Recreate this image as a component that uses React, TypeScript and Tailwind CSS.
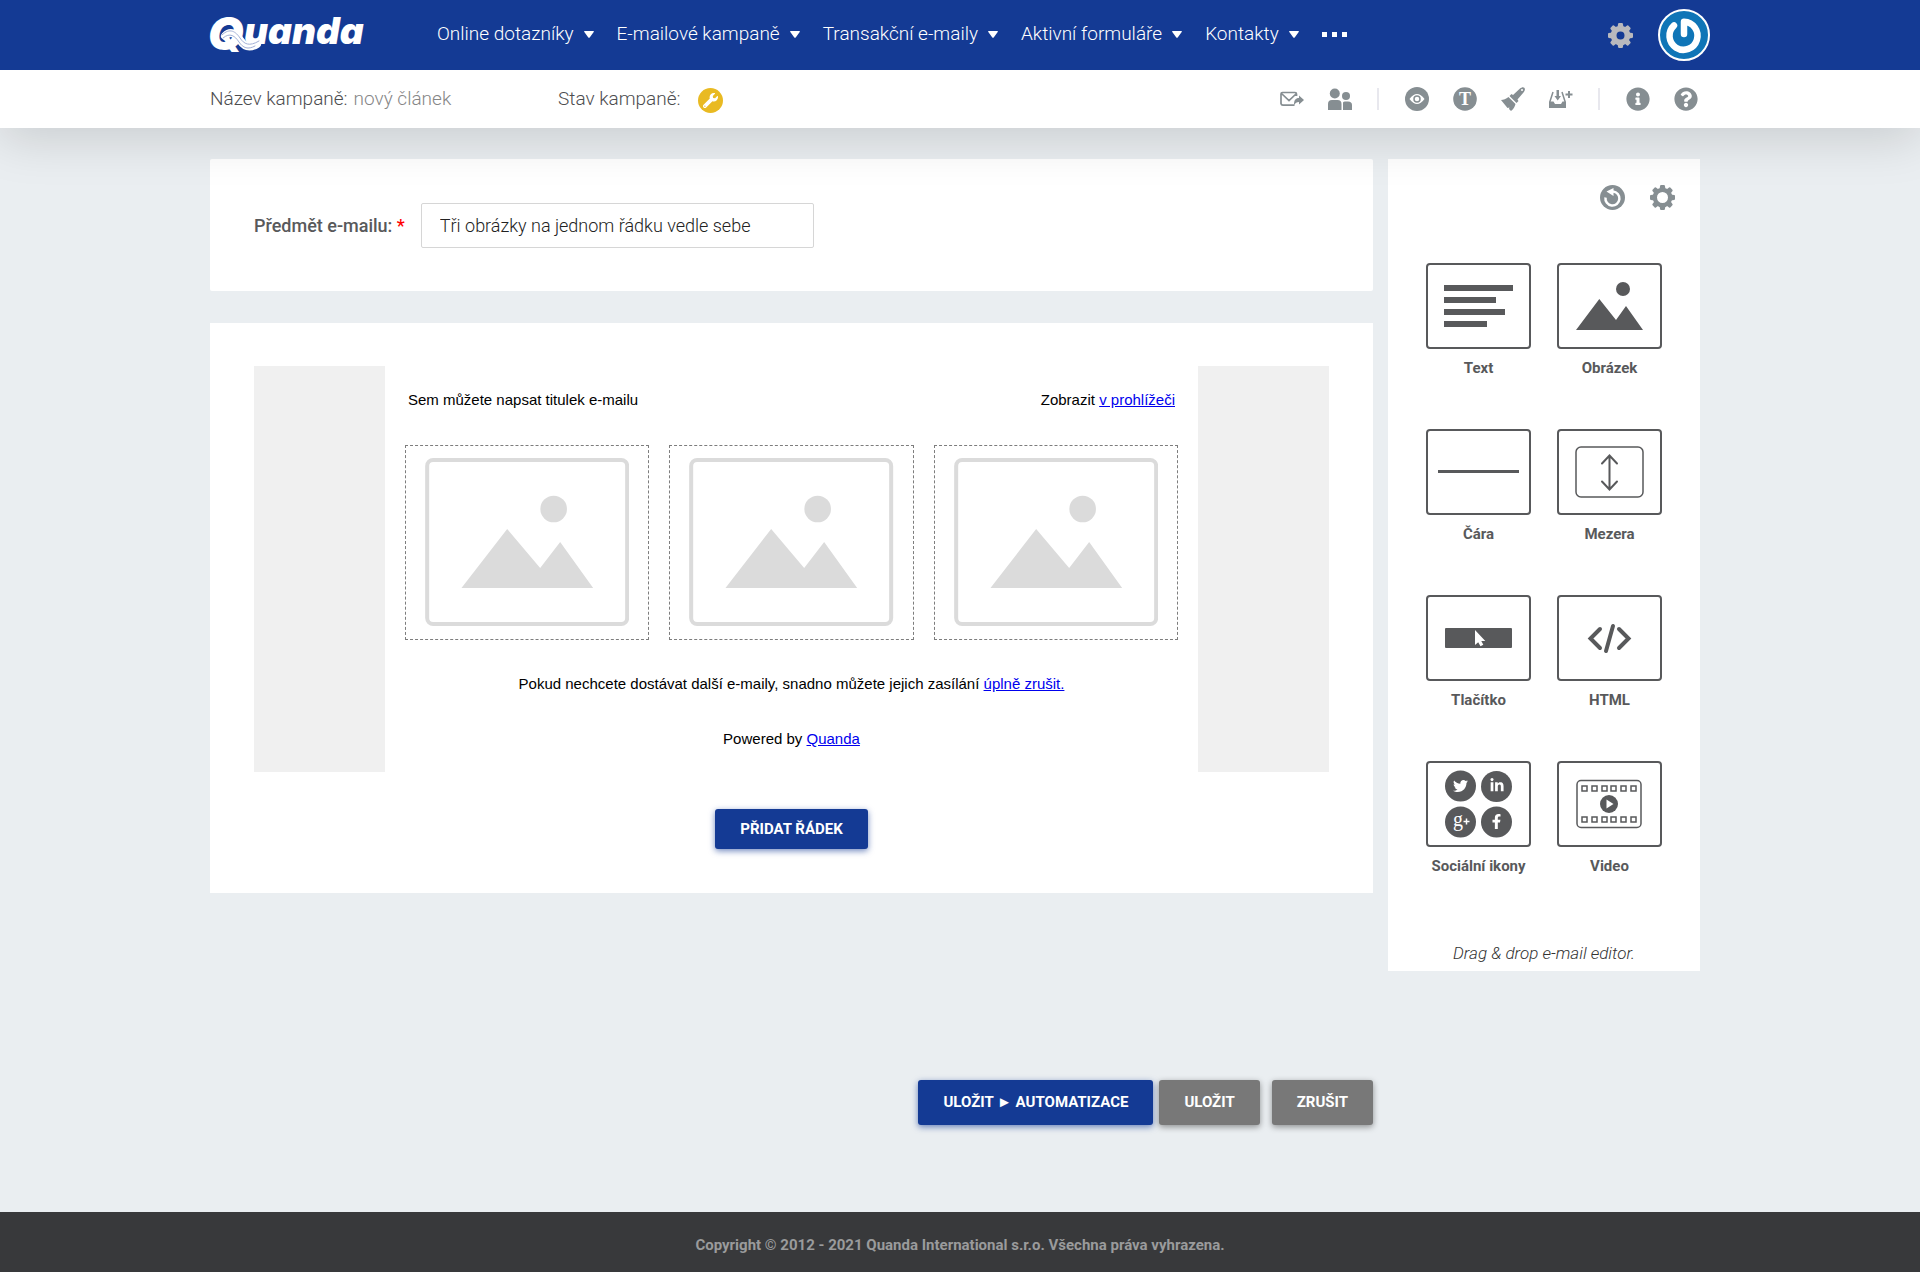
import React from "react";
import { FaTwitter, FaLinkedinIn, FaFacebookF, FaInfoCircle, FaQuestionCircle, FaWrench } from "react-icons/fa";

const menu = ["Online dotazníky", "E-mailové kampaně", "Transakční e-maily", "Aktivní formuláře", "Kontakty"];

function Gear({ className, hole = 4 }: { className?: string; hole?: number }) {
  return (
    <svg viewBox="0 0 25 25" className={className} fill="none" stroke="currentColor">
      <circle cx="12.5" cy="12.5" r={(9.8 + hole) / 2} strokeWidth={9.8 - hole} />
      {[0, 45, 90, 135, 180, 225, 270, 315].map((a) => (
        <path key={a} d="M9.5 4.500l.6-3.700q.2-.8.900-.8h3q.700 0 .9.800l.6 3.700z" fill="currentColor" stroke="none" transform={`rotate(${a} 12.5 12.5)`} />
      ))}
    </svg>
  );
}

function Logo() {
  return (
    <a href="#" className="w-[156px] shrink-0">
      <svg viewBox="0 0 156 46" className="w-[156px] h-[46px] font-['Inter',sans-serif] font-black italic overflow-visible" fill="white">
        <text x="-2" y="38" fontSize="46">Q</text>
        <text x="34" y="32" fontSize="37">uanda</text>
        <g fill="none" strokeLinecap="round">
          <path d="M15 24c6-6 11-2 15 4s9 9 17 4" stroke="white" strokeWidth="8" />
          <path d="M12 23c8-8 14-3 18 3s9 9 19 3M13 26c7-6 12-2 16 4s9 8 16 4" stroke="#a3b1d6" strokeWidth="1" />
        </g>
      </svg>
    </a>
  );
}

function ImageSlot() {
  return (
    <div className="flex-1 h-[195px] px-[19px] py-3 border border-dashed border-[#7d7d7d]">
      <svg viewBox="0 0 204 168" className="w-full h-[168px] text-[#dbdbdb]">
        <rect x="2" y="2" width="200" height="164" rx="6" fill="none" stroke="currentColor" strokeWidth="4" />
        <circle cx="128.5" cy="51" r="13.3" fill="currentColor" />
        <path d="M36.300 130 82 71l33 39 20-26 33 46z" fill="currentColor" />
      </svg>
    </div>
  );
}

const holes = [5, 15, 25, 34, 44, 54];

const blocks = [
  {
    label: "Text",
    art: <path d="M18 22h69v6H18zM18 34h52v6H18zM18 46h61v6H18zM18 58h43v6H18z" fill="currentColor" />,
  },
  {
    label: "Obrázek",
    art: (
      <g fill="currentColor">
        <circle cx="66" cy="26" r="7" />
        <path d="M19 67 42.300 36 59 57l10-14 17 24z" />
      </g>
    ),
  },
  { label: "Čára", art: <path d="M12 41h81v3H12z" fill="currentColor" /> },
  {
    label: "Mezera",
    art: (
      <g fill="none" stroke="currentColor" strokeLinecap="round">
        <rect x="19" y="18" width="67" height="50" rx="5" strokeWidth="1.5" />
        <path d="M52.500 27v33M45 34.500l7.500-8 7.500 8M45 52.500l7.500 8 7.500-8" strokeWidth="2" />
      </g>
    ),
  },
  {
    label: "Tlačítko",
    art: (
      <>
        <rect x="19" y="33" width="67" height="20" rx="1" fill="currentColor" />
        <path d="M49 35v15l3.200-2.800 2.300 4 2.800-1.400-2-3.800h4z" fill="white" />
      </>
    ),
  },
  {
    label: "HTML",
    art: (
      <path
        d="M43 34 33.500 43.500 43 53M62 34l9.500 9.500L62 53M56 31l-7 25"
        fill="none"
        stroke="currentColor"
        strokeWidth="4"
        strokeLinecap="round"
      />
    ),
  },
  {
    label: "Sociální ikony",
    art: (
      <>
        <g fill="currentColor">
          <circle cx="34.500" cy="25" r="15.500" />
          <circle cx="70.500" cy="25.500" r="15.500" />
          <circle cx="34.500" cy="61" r="15.500" />
          <circle cx="70.500" cy="61" r="15.500" />
        </g>
        <g className="text-white">
          <FaTwitter x="27" y="17.500" size="15" />
          <FaLinkedinIn x="63.500" y="17" size="15" />
          <FaFacebookF x="63" y="53" size="15" />
          <text x="27" y="65" fontSize="20" fill="white" className="font-['Liberation_Serif',serif] font-normal">g</text>
          <path d="M37.500 60.500h6M40.500 57.500v6" stroke="white" strokeWidth="1.500" />
        </g>
      </>
    ),
  },
  {
    label: "Video",
    art: (
      <g fill="none" stroke="currentColor" strokeWidth="1.500">
        <rect x="20" y="19.500" width="64" height="47" rx="4" />
        {holes.map((x) => (
          <g key={x}>
            <rect x={x + 20} y="25" width="5" height="5" />
            <rect x={x + 20} y="56" width="5" height="5" />
          </g>
        ))}
        <circle cx="52" cy="43" r="9" fill="currentColor" stroke="none" />
        <path d="M49.500 38.500v9l7-4.500z" fill="white" stroke="none" />
      </g>
    ),
  },
];

function IconButton({ label, children }: { label: string; children: React.ReactNode }) {
  return (
    <button type="button" aria-label={label} className="size-6 text-[#868e92]">
      {children}
    </button>
  );
}

function Separator() {
  return <span className="w-[2px] h-[22px] ml-px mr-[2px] bg-[#e8e8ee]" />;
}

function Header() {
  return (
    <header className="relative z-20 h-[70px] bg-[#143a94]">
      <div className="max-w-[1500px] h-full mx-auto flex items-center text-white">
        <Logo />
        <nav className="ml-[71px] pb-[2px] flex items-center gap-[23px] text-[19px] font-light">
          {menu.map((item) => (
            <a key={item} href="#" className="flex items-center gap-[10px] whitespace-nowrap">
              {item}
              <svg viewBox="0 0 10 7" className="w-[10px] h-[7px]" fill="currentColor">
                <path d="M.5 0h9q.6.500.2 1L5.700 6.500q-.7.600-1.400 0L.3 1Q-.1.500.500 0z" />
              </svg>
            </a>
          ))}
          <button type="button" aria-label="Další" className="flex gap-[5px]">
            <span className="size-[5px] bg-white" />
            <span className="size-[5px] bg-white" />
            <span className="size-[5px] bg-white" />
          </button>
        </nav>
        <button type="button" aria-label="Nastavení" className="ml-auto text-[#b9b9bd]">
          <Gear className="size-[25px]" />
        </button>
        <button type="button" aria-label="Účet" className="ml-[25px] size-[52px] rounded-full border-2 border-white bg-[#0f75b7]">
          <svg viewBox="0 0 48 48" fill="none" stroke="white" strokeWidth="6.500" strokeLinecap="round">
            <path d="M14 14.500a14 14 0 1 0 10-3.700V23" strokeLinejoin="round" />
          </svg>
        </button>
      </div>
    </header>
  );
}

function Toolbar() {
  return (
    <div className="relative z-10 h-[58px] bg-white shadow-[0_10px_50px_rgba(0,0,0,0.15)]">
      <div className="max-w-[1500px] h-full mx-auto flex items-center text-[19px] font-light text-[#4d4d4f]">
        <div className="w-[348px] flex gap-[6px]">
          <span>Název kampaně:</span>
          <span className="text-[#868686]">nový článek</span>
        </div>
        <div>Stav kampaně:</div>
        <span className="ml-[17px] mt-[2px] size-[25px] rounded-full bg-[#e9ba22] flex items-center justify-center text-white">
          <FaWrench size={15} />
        </span>
        <div className="ml-auto pr-3 flex items-center gap-6">
          <IconButton label="Odeslat test">
            <svg viewBox="0 0 24 24" fill="none" stroke="currentColor" strokeWidth="1.700">
              <path d="M14.500 18.200H3A2 2 0 0 1 1 16.500V7a1.500 1.500 0 0 1 1.500-1.500H15A1.500 1.500 0 0 1 16.500 7v2M1.500 6.500l7.500 7 7.500-7" />
              <path d="M14 18c0-5 1.500-7 5-7V8.500l5 4.500-5 4.500V15c-2.500 0-3.500 1-5 3z" fill="currentColor" stroke="none" />
            </svg>
          </IconButton>
          <IconButton label="Příjemci">
            <svg viewBox="0 0 24 24" fill="currentColor">
              <circle cx="6.800" cy="6.500" r="5" />
              <circle cx="18" cy="9" r="4" />
              <path d="M0 23v-6q0-4 4-4h5.500q4 0 4 4v6zM15 23v-7.500q.5-1 2-1h3q4 0 4 3.500v5z" />
            </svg>
          </IconButton>
          <Separator />
          <IconButton label="Náhled">
            <svg viewBox="0 0 24 24">
              <circle cx="12" cy="12" r="12" fill="currentColor" />
              <path d="M4.500 12q7.500-10 15 0-7.500 10-15 0z" fill="white" />
              <circle cx="12" cy="12" r="3" fill="white" stroke="currentColor" strokeWidth="1.500" />
            </svg>
          </IconButton>
          <IconButton label="Text">
            <svg viewBox="0 0 24 24">
              <circle cx="12" cy="12" r="11.800" fill="currentColor" />
              <text x="12" y="18" textAnchor="middle" fontSize="18" fontWeight="bold" fill="white" className="font-['Liberation_Serif',serif]">T</text>
            </svg>
          </IconButton>
          <IconButton label="Styl">
            <svg viewBox="0 0 24 24" fill="currentColor">
              <path d="M23.300.7c1 1 .8 2.800-.4 4.300l-6.400 7.500 1 1.500-2 2L8.500 9l2-2 1.500 1 7-6.400C20.500.2 22.300-.3 23.300.7z" />
              <path d="M7.500 10l7 7c-.5 2.500-2 5-4.500 7l-2-2 .5-1.500-2 .5L0 13c2.500 0 5-1 7.500-3z" />
              <circle cx="21" cy="3" r="1" fill="white" />
            </svg>
          </IconButton>
          <IconButton label="Uložit šablonu">
            <svg viewBox="0 0 24 24" fill="currentColor">
              <path d="M0 14.500h4.500L6 17h6l1.500-2.500H17V21H0z" />
              <path d="M7.500 3h2.500v6H12l-3.300 4.500L5.500 9h2zM19 4h2v2.500h2.500v2H21V11h-2V8.500h-2.500v-2H19z" />
              <path d="M.8 15 4 5M16.200 15 13 5" stroke="currentColor" strokeWidth="1.500" />
            </svg>
          </IconButton>
          <Separator />
          <IconButton label="Informace">
            <FaInfoCircle size={24} />
          </IconButton>
          <IconButton label="Nápověda">
            <FaQuestionCircle size={24} />
          </IconButton>
        </div>
      </div>
    </div>
  );
}

function EmailPreview() {
  return (
    <div className="flex">
      <div className="w-[131px] bg-[#f0f0f0]" />
      <div className="flex-1 px-5 pb-[23px] font-['Liberation_Sans',Arial,sans-serif] text-[15px] leading-5 text-black">
        <div className="pt-6 px-[3px] flex justify-between">
          <p>Sem můžete napsat titulek e-mailu</p>
          <p>
            Zobrazit <a href="#" className="text-[#0000ee] underline">v prohlížeči</a>
          </p>
        </div>
        <div className="mt-[35px] flex gap-5">
          <ImageSlot />
          <ImageSlot />
          <ImageSlot />
        </div>
        <p className="mt-[34px] text-center">
          Pokud nechcete dostávat další e-maily, snadno můžete jejich zasílání{" "}
          <a href="#" className="text-[#0000ee] underline">úplně zrušit.</a>
        </p>
        <p className="mt-[35px] text-center">
          Powered by <a href="#" className="text-[#0000ee] underline">Quanda</a>
        </p>
      </div>
      <div className="w-[131px] bg-[#f0f0f0]" />
    </div>
  );
}

function Sidebar() {
  return (
    <aside className="w-[312px] bg-white">
      <div className="pt-[26px] pr-[25px] flex justify-end gap-[25px] text-[#868e92]">
        <button type="button" aria-label="Obnovit">
          <svg viewBox="0 0 25 25" className="size-[25px]" fill="none">
            <circle cx="12.500" cy="12.500" r="12.500" fill="currentColor" />
            <path d="M5.500 12.500a7 7 0 1 0 7.500-6" stroke="white" strokeWidth="2.500" />
            <path d="M13.500 3v8L6.500 6.500z" fill="white" />
            <path d="m5 9 8 6" stroke="currentColor" strokeWidth="2.500" />
          </svg>
        </button>
        <button type="button" aria-label="Nastavení editoru">
          <Gear className="size-[25px]" hole={5.5} />
        </button>
      </div>
      <ul className="mt-[53px] px-[38px] grid grid-cols-2 gap-x-[26px] gap-y-[46px]">
        {blocks.map((b) => (
          <li key={b.label} className="text-[15px] leading-[30px] font-bold text-center text-[#58595b] whitespace-nowrap">
            <div className="h-[86px] mb-1 border-2 border-[#58595b] rounded">
              <svg viewBox="2 2 101 82" className="w-full h-full">{b.art}</svg>
            </div>
            {b.label}
          </li>
        ))}
      </ul>
      <p className="mt-[60px] pb-[6px] text-center text-[17px] leading-6 font-light italic text-[#333]">Drag &amp; drop e-mail editor.</p>
    </aside>
  );
}

const primary = "bg-[#143a94] shadow-[0_2px_6px_rgba(20,58,148,0.6)]";
const secondary = "bg-[#787878] shadow-[0_2px_6px_rgba(0,0,0,0.4)]";
const button = "px-[25px] rounded-[3px] text-[15px] font-bold text-white whitespace-nowrap";

export default function App() {
  return (
    <div className="min-h-screen flex flex-col bg-[#eaeef1] font-['Roboto',sans-serif] text-[#58595b]">
      <Header />
      <Toolbar />
      <div className="w-full max-w-[1500px] mx-auto pt-[31px] pr-[10px] flex items-start gap-[15px]">
        <main className="flex-1">
          <section className="px-11 pt-11 pb-[43px] flex items-center bg-white rounded-[2px]">
            <label htmlFor="subject" className="text-[18px] font-medium">
              Předmět e-mailu: <span className="text-[#ff0000]">*</span>
            </label>
            <input
              id="subject"
              defaultValue="Tři obrázky na jednom řádku vedle sebe"
              className="ml-4 w-[393px] h-[45px] px-[18px] border border-[#d6d6d6] rounded-[2px] text-[18px] font-light text-[#222]"
            />
          </section>
          <section className="mt-8 px-11 pt-[43px] pb-[44px] bg-white">
            <EmailPreview />
            <div className="mt-[37px] flex justify-center">
              <button type="button" className={`h-10 ${button} ${primary}`}>PŘIDAT ŘÁDEK</button>
            </div>
          </section>
          <div className="mt-[187px] flex justify-end">
            <button type="button" className={`h-[45px] ${button} ${primary}`}>ULOŽIT ► AUTOMATIZACE</button>
            <button type="button" className={`ml-[6px] h-[45px] ${button} ${secondary}`}>ULOŽIT</button>
            <button type="button" className={`ml-3 h-[45px] ${button} ${secondary}`}>ZRUŠIT</button>
          </div>
        </main>
        <Sidebar />
      </div>
      <footer className="mt-auto h-[60px] pt-[6px] flex items-center justify-center bg-[#38393b] text-[15px] font-bold text-[#9a9b9c]">
        Copyright © 2012 - 2021 Quanda International s.r.o. Všechna práva vyhrazena.
      </footer>
    </div>
  );
}
